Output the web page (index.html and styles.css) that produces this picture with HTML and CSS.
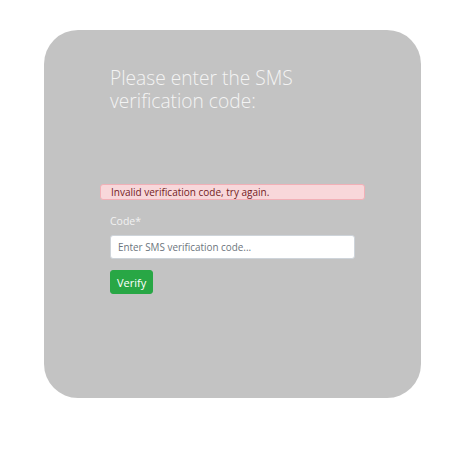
FILE: index.html
```html
<!DOCTYPE html>
<html>
<head>
<meta charset="utf-8">
<link rel="stylesheet" href="styles.css">
</head>
<body>
<div class="page">
  <div class="card">
    <h1 class="title">Please enter the SMS verification code:</h1>
    <div class="alert">Invalid verification code, try again.</div>
    <form class="form">
      <label class="label" for="code">Code*</label>
      <input class="input" id="code" type="text" placeholder="Enter SMS verification code...">
      <button class="btn" type="button">Verify</button>
    </form>
  </div>
</div>
</body>
</html>
```

FILE: styles.css
```css
html, body {
  margin: 0;
  padding: 0;
  background: #ffffff;
}
body {
  font-family: "Open Sans", "Noto Sans", sans-serif;
}
.page {
  padding: 30px 0 0 44px;
}
.card {
  box-sizing: border-box;
  width: 377px;
  height: 368px;
  background: #c3c3c3;
  border-radius: 34px;
  padding: 36px 66px 0 66px;
}
.title {
  margin: 0;
  font-weight: 300;
  font-size: 19.2px;
  line-height: 23px;
  color: #f4f4f4;
  width: 200px;
}
.alert {
  margin: 72px -10px 0 -10px;
  height: 16px;
  box-sizing: border-box;
  background: #f8d7da;
  border: 1px solid #f1b0b7;
  border-radius: 3px;
  color: #721c24;
  font-size: 10px;
  line-height: 14px;
  padding: 0 10px;
}
.form {
  display: flex;
  flex-direction: column;
  align-items: flex-start;
  margin-top: 14px;
}
.label {
  font-size: 10.5px;
  line-height: 15px;
  color: #f2f2f2;
  margin-bottom: 6px;
}
.input {
  box-sizing: border-box;
  width: 245px;
  height: 24px;
  border: 1px solid #ced4da;
  border-radius: 3px;
  background: #fff;
  padding: 0 7px;
  font-family: inherit;
  font-size: 9.9px;
  color: #495057;
  outline: none;
}
.input::placeholder {
  color: #6c757d;
}
.btn {
  margin-top: 11px;
  box-sizing: border-box;
  height: 24px;
  padding: 0 6px;
  background: #28a745;
  border: 1px solid #28a745;
  border-radius: 3px;
  color: #fff;
  font-family: inherit;
  font-size: 11px;
}
```
